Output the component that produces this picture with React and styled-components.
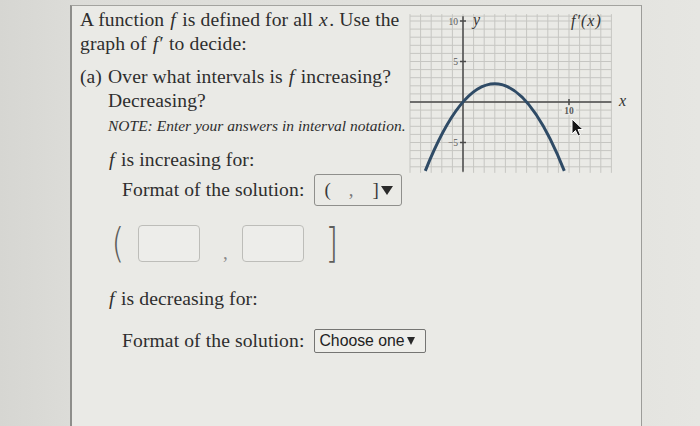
import React from 'react';
import styled, { createGlobalStyle } from 'styled-components';

const Global = createGlobalStyle`
  html, body { margin: 0; padding: 0; }
  body {
    background: linear-gradient(90deg, #d6d6d2 0px, #dcdcd8 70px, #e4e4e0 640px, #e6e6e2 700px);
    font-family: "Liberation Serif", "Times New Roman", serif;
    color: #2e2e2e;
  }
`;

const Page = styled.div`
  height: 426px;
  box-sizing: border-box;
  padding: 5px 0 0 70px;
  overflow: hidden;
`;

const Panel = styled.section`
  width: 572px;
  height: 440px;
  box-sizing: border-box;
  border-left: 2px solid #8e8e8b;
  border-top: 1px solid #a3a39f;
  border-right: 1px solid #9c9c99;
  background: #eaeae6;
  padding: 2px 0 0 8px;
  display: grid;
  grid-template-columns: 330px 230px;
  align-content: start;
`;

const Question = styled.div`
  display: flex;
  flex-direction: column;
`;

const Para = styled.p`
  margin: 0;
  font-size: 19.6px;
  line-height: 24px;
  letter-spacing: 0.1px;
`;

const Var = styled.i`
  font-style: italic;
  margin: 0 1.5px 0 1px;
`;

const Part = styled.div`
  display: flex;
  margin-top: 9px;
`;

const PartLabel = styled.span`
  flex: 0 0 28px;
  font-size: 19.6px;
  line-height: 24px;
`;

const PartBody = styled.div`
  flex: 1;
  display: flex;
  flex-direction: column;
`;

const Note = styled.p`
  margin: 3px 0 0;
  font-size: 15.5px;
  line-height: 20px;
  font-style: italic;
  white-space: nowrap;
`;

const Prompt = styled(Para)`
  margin-top: ${p => p.$top || 0}px;
`;

const FormatRow = styled.div`
  display: flex;
  align-items: center;
  gap: 10px;
  margin: ${p => p.$top || 0}px 0 0 14px;
  white-space: nowrap;
`;

const FormatLabel = styled.span`
  font-size: 19.6px;
  line-height: 24px;
  letter-spacing: 0.1px;
`;

const IntervalSelect = styled.div`
  display: flex;
  align-items: center;
  width: 88px;
  height: 32px;
  box-sizing: border-box;
  border: 1px solid #8f8f8c;
  border-radius: 3px;
  padding-left: 9px;
  font-size: 19px;
  color: #3a3a3a;
`;

const Pick = styled.span`
  margin-left: ${p => p.$gap || 0}px;
  color: ${p => (p.$soft ? '#777' : 'inherit')};
`;

const Caret = styled.span`
  width: 0;
  height: 0;
  margin-left: ${p => p.$gap || 0}px;
  border-left: ${p => p.$w}px solid transparent;
  border-right: ${p => p.$w}px solid transparent;
  border-top: ${p => p.$h}px solid #2a2a2a;
`;

const ChooseSelect = styled.div`
  display: flex;
  align-items: center;
  width: 112px;
  height: 24px;
  box-sizing: border-box;
  border: 1px solid #757573;
  border-radius: 2px;
  background: #eeeeea;
  padding-left: 4px;
  font-family: "Liberation Sans", Arial, sans-serif;
  font-size: 15.8px;
  color: #222;
`;

const IntervalRow = styled.div`
  display: flex;
  align-items: flex-start;
  margin-top: 14px;
  margin-left: 2px;
  color: #5e5e5c;
`;

const Bracket = styled.span`
  font-family: "DejaVu Sans", sans-serif;
  font-weight: 200;
  font-size: 41px;
  line-height: 46px;
  margin-left: ${p => p.$gap || 0}px;
  transform: scaleX(0.8);
`;

const AnswerBox = styled.div`
  width: 62px;
  height: 37px;
  margin-top: 5px;
  margin-left: ${p => p.$gap || 0}px;
  box-sizing: border-box;
  border: 1px solid #bdbdb9;
  border-radius: 4px;
  background: #ededea;
`;

const Comma = styled.span`
  font-size: 19px;
  line-height: 24px;
  margin: 21px 0 0 23px;
  color: #888;
`;

const GraphWrap = styled.div`
  padding-top: 0;
`;

const Graph = styled.svg`
  display: block;
  overflow: visible;
`;

const Decreasing = styled.div`
  grid-column: 1 / -1;
  padding-left: 28px;
  display: flex;
  flex-direction: column;
`;

const GX = u => 53 + 10.6 * u;
const GY = v => 94 - 8.1 * v;

function GraphPlot() {
  const vlines = [];
  for (let u = -5; u <= 14; u++) vlines.push(GX(u));
  const hlines = [];
  for (let v = -8; v <= 10; v++) hlines.push(GY(v));
  const top = GY(10.6);
  const bottom = GY(-8.5);
  const left = GX(-5);
  const right = GX(14);
  const p0 = [GX(3 - Math.sqrt(43)), GY(-8.5)];
  const c = [GX(3), GY(-8.5 + 3.2785 * Math.sqrt(43))];
  const p2 = [GX(3 + Math.sqrt(43)), GY(-8.5)];
  return (
    <Graph width="230" height="170" viewBox="0 0 230 170">
      <g stroke="#c6c6c2" strokeWidth="1">
        {vlines.map((x, i) => (
          <line key={'v' + i} x1={x} y1={top - 2} x2={x} y2={bottom + 2} />
        ))}
        {hlines.map((y, i) => (
          <line key={'h' + i} x1={left} y1={y} x2={right} y2={y} />
        ))}
        <line x1={left} y1={top} x2={right} y2={top} />
      </g>
      <g stroke="#4a4a4a" strokeWidth="1.5">
        <line x1={left} y1={GY(0)} x2={right} y2={GY(0)} />
        <line x1={GX(0)} y1={top} x2={GX(0)} y2={bottom + 1} />
        {[10, 5, -5].map(v => (
          <line key={v} x1={GX(0) - 3} y1={GY(v)} x2={GX(0) + 3} y2={GY(v)} />
        ))}
        <line x1={GX(10)} y1={GY(0) - 3} x2={GX(10)} y2={GY(0) + 3} />
      </g>
      <path
        d={`M${p0[0]} ${p0[1]} Q${c[0]} ${c[1]} ${p2[0]} ${p2[1]}`}
        fill="none"
        stroke="#2f4b66"
        strokeWidth="3"
      />
      <g fontFamily="Liberation Serif, serif" fontSize="9.5" fill="#5a5a5a">
        <text x="48" y="17" textAnchor="end">10</text>
        <text x="48" y="57" textAnchor="end">5</text>
        <text x="48" y="138" textAnchor="end">−5</text>
        <rect x={GX(10) - 7} y="98" width="14" height="9" fill="#eaeae6" />
        <text x={GX(10)} y="106" textAnchor="middle" fontWeight="bold">10</text>
      </g>
      <g fontFamily="Liberation Serif, serif" fontStyle="italic" fill="#333">
        <text x="63" y="17" fontSize="16">y</text>
        <text x="161" y="18" fontSize="16" letterSpacing="1">f′(x)</text>
        <text x="209" y="98" fontSize="16">x</text>
      </g>
      <path
        transform={`translate(${GX(10) + 3} 111)`}
        d="M0 0 L0 15 L3.5 11.5 L6 17 L8.5 16 L6 10.5 L11 10.5 Z"
        fill="#151515"
        stroke="#ffffff"
        strokeWidth="1"
      />
    </Graph>
  );
}

export default function App() {
  return (
    <>
      <Global />
      <Page>
        <Panel>
          <Question>
            <Para>
              A function <Var>f</Var> is defined for all <Var>x</Var>. Use the graph of{' '}
              <Var>f′</Var> to decide:
            </Para>
            <Part>
              <PartLabel>(a)</PartLabel>
              <PartBody>
                <Para>
                  Over what intervals is <Var>f</Var> increasing? Decreasing?
                </Para>
                <Note>NOTE: Enter your answers in interval notation.</Note>
                <Prompt $top={12}>
                  <Var>f</Var> is increasing for:
                </Prompt>
                <FormatRow $top={2}>
                  <FormatLabel>Format of the solution:</FormatLabel>
                  <IntervalSelect>
                    <Pick>(</Pick>
                    <Pick $gap={18} $soft>,</Pick>
                    <Pick $gap={19}>]</Pick>
                    <Caret $gap={2} $w={6} $h={9} />
                  </IntervalSelect>
                </FormatRow>
                <IntervalRow>
                  <Bracket>(</Bracket>
                  <AnswerBox $gap={12} />
                  <Comma>,</Comma>
                  <AnswerBox $gap={14} />
                  <Bracket $gap={20}>]</Bracket>
                </IntervalRow>
              </PartBody>
            </Part>
          </Question>
          <GraphWrap>
            <GraphPlot />
          </GraphWrap>
          <Decreasing>
            <Prompt $top={21}>
              <Var>f</Var> is decreasing for:
            </Prompt>
            <FormatRow $top={18}>
              <FormatLabel>Format of the solution:</FormatLabel>
              <ChooseSelect>
                Choose one
                <Caret $gap={2} $w={4.5} $h={8} />
              </ChooseSelect>
            </FormatRow>
          </Decreasing>
        </Panel>
      </Page>
    </>
  );
}
